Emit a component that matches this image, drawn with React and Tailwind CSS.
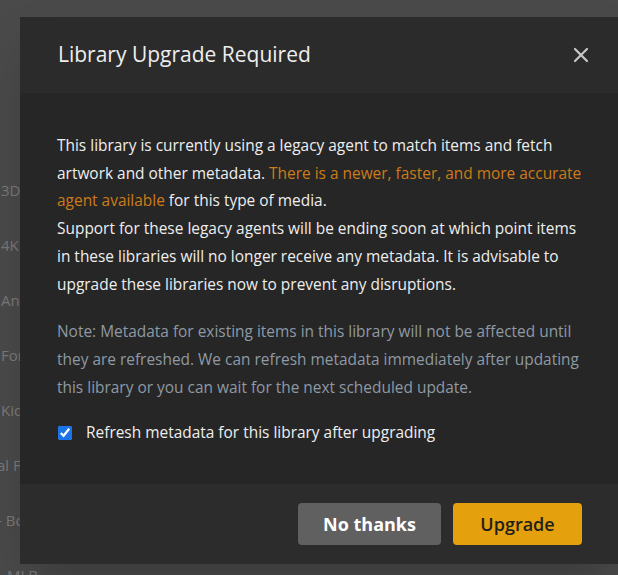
import { X } from "lucide-react";

const SIDEBAR = [
  { label: "3D Movies", shift: "" },
  { label: "4K Movies", shift: "" },
  { label: "Anime", shift: "" },
  { label: "Foreign", shift: "" },
  { label: "Kids", shift: "" },
  { label: "al Films", shift: "-ml-[4px]" },
  { label: "- Books", shift: "-ml-[4px]" },
  { label: "MLB", shift: "ml-[6px]" },
];

export default function App() {
  return (
    <div
      className="relative w-[618px] h-[575px] overflow-hidden bg-[#4a4a4a]"
      style={{ fontFamily: '"Open Sans", "Noto Sans", sans-serif' }}
    >
      {/* Dimmed page behind the dialog */}
      <div className="flex flex-col pt-[176px] pl-[1px]">
        {SIDEBAR.map((item) => (
          <div key={item.label} className={`h-[55px] text-[15px] leading-[28px] text-[#7a7a7a] whitespace-nowrap ${item.shift}`}>
            {item.label}
          </div>
        ))}
      </div>

      {/* Dialog */}
      <div className="absolute left-[20px] top-[17px] w-[600px] flex flex-col shadow-2xl">
        <div className="h-[76px] bg-[#2b2b2b] flex items-center justify-between pl-[38px] pr-[27px]">
          <h2 className="text-[21px] text-[#eeeeee] font-normal">Library Upgrade Required</h2>
          <button className="text-[#c8c8c8] flex items-center justify-center w-[24px] h-[24px]" aria-label="Close">
            <X size={24} strokeWidth={2.2} />
          </button>
        </div>

        <div className="bg-[#262626] pl-[37px] pr-[30px] pt-[39px] pb-[37px] text-[15.45px] leading-[27.7px]">
          <p className="text-[#eeeeee]">
            This library is currently using a legacy agent to match items and fetch artwork and other metadata.{" "}
            <a className="text-[#cc7b19]">There is a newer, faster, and more accurate agent available</a> for this type of media.
            <br />
            Support for these legacy agents will be ending soon at which point items in these libraries will no longer
            receive any metadata. It is advisable to upgrade these libraries now to prevent any disruptions.
          </p>
          <p className="mt-[20px] text-[#8e99a4]">
            Note: Metadata for existing items in this library will not be affected until they are refreshed. We can refresh
            metadata immediately after updating this library or you can wait for the next scheduled update.
          </p>
          <label className="mt-[18px] flex items-center gap-[14px] text-[#eeeeee]">
            <input type="checkbox" defaultChecked className="ml-[1px] w-[14px] h-[14px] m-0 accent-[#1a73e8]" />
            Refresh metadata for this library after upgrading
          </label>
        </div>

        <div className="h-[80px] bg-[#2c2c2c] flex items-center justify-end gap-[12px] pr-[38px]">
          <button className="h-[42px] w-[143px] rounded-[4px] bg-[#606060] text-white text-[18px] font-bold">
            No thanks
          </button>
          <button className="h-[42px] w-[129px] rounded-[4px] bg-[#e5a00d] text-[#1f1f1f] text-[18px] font-semibold">
            Upgrade
          </button>
        </div>
      </div>
    </div>
  );
}
